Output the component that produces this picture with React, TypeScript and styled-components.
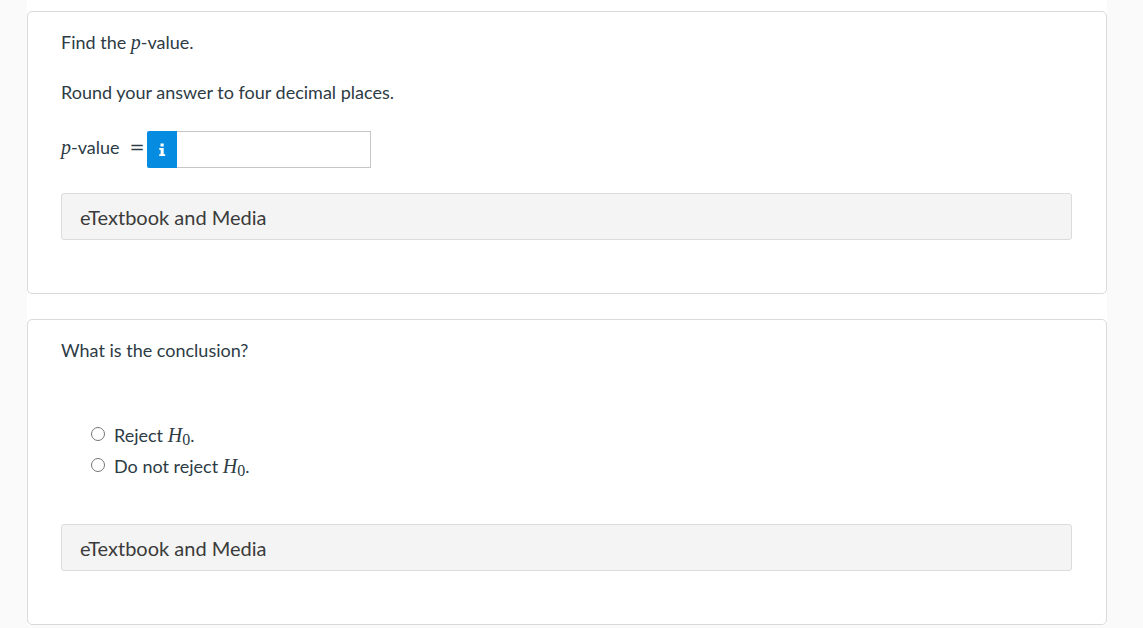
import React from "react";
import styled, { createGlobalStyle } from "styled-components";

const GlobalStyle = createGlobalStyle`
  *, *::before, *::after { box-sizing: border-box; }
  body {
    margin: 0;
    background: #fafafa;
    color: #2d3b45;
    font-family: Lato, "Liberation Sans", sans-serif;
    font-size: 18px;
    line-height: 24px;
  }
`;

const Page = styled.main`
  display: flex;
  flex-direction: column;
  gap: 25px;
  margin: 0 36px 0 27px;
  padding: 11px 0 0;
  background: #fff;
`;

const Card = styled.section`
  display: flex;
  flex-direction: column;
  padding: 18px 34px 53px 33px;
  border: 1px solid #d9dadb;
  border-radius: 5px;
  background: #fff;
`;

const Prompt = styled.p`
  margin: 0 0 26px;
`;

const MathText = styled.i`
  font-family: "Liberation Serif", serif;
  font-size: 20px;
  line-height: 20px;
`;

const Subscript = styled.sub`
  font-family: "Liberation Serif", serif;
  font-size: 16px;
  line-height: 0;
  vertical-align: -3px;
`;

const AnswerRow = styled.div`
  display: flex;
  align-items: center;
  margin: 1px 0 25px;
`;

const AnswerLabel = styled.label`
  display: flex;
  align-items: baseline;
  padding-bottom: 4px;
`;

const Equals = styled.span`
  margin: 0 2px 0 10px;
  font-family: "DejaVu Serif", serif;
`;

const InfoButton = styled.button`
  display: flex;
  align-items: center;
  justify-content: center;
  width: 30px;
  height: 37px;
  padding: 0;
  border: 0;
  border-radius: 2px 0 0 2px;
  background: #058ce1;
  color: #fff;
`;

const AnswerInput = styled.input`
  width: 194px;
  height: 37px;
  padding: 0 8px;
  border: 1px solid #c4c6c8;
  border-left: 0;
  border-radius: 0;
  background: #fff;
  font: inherit;
`;

const MediaButton = styled.button`
  width: 100%;
  height: 47px;
  padding: 1px 18px 0;
  border: 1px solid #dcdcdc;
  border-radius: 3px;
  background: #f4f4f4;
  color: #3b3b3b;
  font: inherit;
  font-size: 20px;
  font-variant-ligatures: none;
  text-align: left;
`;

const Choices = styled.fieldset`
  display: flex;
  flex-direction: column;
  gap: 7px;
  margin: 35px 0 46px;
  padding: 0 0 0 30px;
  border: 0;
`;

const Choice = styled.label`
  display: flex;
  align-items: flex-start;
  gap: 9px;
`;

const Radio = styled.input`
  appearance: none;
  flex: none;
  width: 14px;
  height: 14px;
  margin: 4px 0 0;
  border: 1px solid #767676;
  border-radius: 50%;
  background: #fff;

  &:checked {
    box-shadow: inset 0 0 0 2px #fff;
    background: #058ce1;
  }
`;

const InfoIcon = () => (
  <svg width="8" height="14" viewBox="0 0 8 14" fill="currentColor" aria-hidden="true">
    <path d="M2.5 0.5h3.2v3H2.5zM1.2 5h4.5v6.2H7.2V13H1.2v-1.8h1.4V6.8H1.2z" />
  </svg>
);

const NullHypothesis = () => (
  <>
    <MathText>H</MathText>
    <Subscript>0</Subscript>
  </>
);

export default function App() {
  return (
    <>
      <GlobalStyle />
      <Page>
        <Card>
          <Prompt>
            Find the <MathText>p</MathText>-value.
          </Prompt>
          <Prompt>Round your answer to four decimal places.</Prompt>
          <AnswerRow>
            <AnswerLabel htmlFor="p-value">
              <MathText>p</MathText>-value <Equals>=</Equals>
            </AnswerLabel>
            <InfoButton type="button" aria-label="Answer information">
              <InfoIcon />
            </InfoButton>
            <AnswerInput id="p-value" type="text" />
          </AnswerRow>
          <MediaButton type="button">eTextbook and Media</MediaButton>
        </Card>
        <Card>
          <Prompt id="conclusion">What is the conclusion?</Prompt>
          <Choices aria-labelledby="conclusion">
            <Choice>
              <Radio type="radio" name="conclusion" value="reject" />
              <span>
                Reject <NullHypothesis />.
              </span>
            </Choice>
            <Choice>
              <Radio type="radio" name="conclusion" value="do-not-reject" />
              <span>
                Do not reject <NullHypothesis />.
              </span>
            </Choice>
          </Choices>
          <MediaButton type="button">eTextbook and Media</MediaButton>
        </Card>
      </Page>
    </>
  );
}
